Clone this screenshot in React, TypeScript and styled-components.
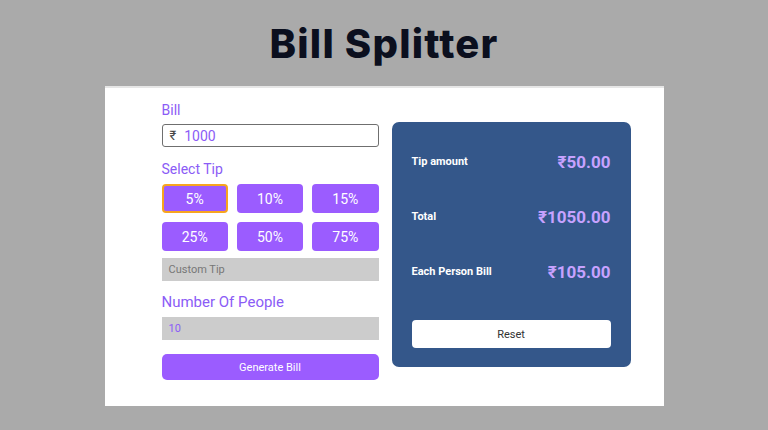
import React from 'react';
import styled, { createGlobalStyle } from 'styled-components';

const Global = createGlobalStyle`
  body {
    margin: 0;
    background: #aaaaaa;
    font-family: Roboto, "Liberation Sans", Arial, sans-serif;
  }
`;

const Page = styled.div`
  width: 768px;
  height: 430px;
  display: flex;
  flex-direction: column;
  align-items: center;
`;

const Title = styled.h1`
  margin: 0;
  height: 86px;
  display: flex;
  align-items: center;
  font-family: Inter, "Noto Sans", sans-serif;
  font-weight: 800;
  font-size: 40px;
  letter-spacing: 1.2px;
  color: #0b0f1e;
`;

const Card = styled.div`
  box-sizing: border-box;
  width: 559px;
  height: 320px;
  background: #ffffff;
  border-top: 2px solid #e6e6e6;
  padding: 14px 33px 0 57px;
  display: grid;
  grid-template-columns: 217px 239px;
  column-gap: 13px;
  align-items: start;
`;

const Form = styled.div`
  display: flex;
  flex-direction: column;
`;

const Label = styled.label<{ $size?: number; $top?: number }>`
  font-size: ${(p) => p.$size ?? 14}px;
  line-height: ${(p) => (p.$size ?? 14) + 2}px;
  color: #8b5cf6;
  margin-top: ${(p) => p.$top ?? 0}px;
  margin-bottom: 6px;
`;

const BillBox = styled.div`
  box-sizing: border-box;
  height: 23px;
  border: 1px solid #6f6f6f;
  border-radius: 3px;
  display: flex;
  align-items: center;
  gap: 8px;
  padding: 0 7px;
  color: #8b5cf6;
  font-size: 14px;
`;

const Rupee = styled.span`
  font-size: 13px;
  color: #444;
`;

const TipGrid = styled.div`
  display: grid;
  grid-template-columns: repeat(3, 1fr);
  gap: 9px;
  margin-top: 1px;
`;

const TipButton = styled.button<{ $active?: boolean }>`
  box-sizing: border-box;
  height: 29px;
  border: ${(p) => (p.$active ? '2px solid #f7a51f' : 'none')};
  border-radius: 4px;
  background: #9b5cff;
  color: #ffffff;
  font-family: Roboto, "Liberation Sans", sans-serif;
  font-size: 14px;
  padding: 0;
`;

const GrayInput = styled.div<{ $top: number; $color: string }>`
  box-sizing: border-box;
  height: 23px;
  margin-top: ${(p) => p.$top}px;
  background: #cccccc;
  display: flex;
  align-items: center;
  padding: 0 7px;
  font-size: 11px;
  color: ${(p) => p.$color};
`;

const GenerateButton = styled.button`
  height: 26px;
  margin-top: 14px;
  border: none;
  border-radius: 5px;
  background: #9b5cff;
  color: #ffffff;
  font-family: Roboto, "Liberation Sans", sans-serif;
  font-size: 11px;
`;

const Panel = styled.div`
  box-sizing: border-box;
  margin-top: 20px;
  height: 245px;
  background: #34578a;
  border-radius: 7px;
  padding: 12px 20px 19px;
  display: flex;
  flex-direction: column;
`;

const Row = styled.div`
  height: 55px;
  display: flex;
  align-items: center;
  justify-content: space-between;
`;

const RowLabel = styled.span`
  color: #ffffff;
  font-size: 11px;
  font-weight: 700;
`;

const RowValue = styled.span`
  color: #c7a2ff;
  font-size: 17px;
  font-weight: 700;
`;

const ResetButton = styled.button`
  margin-top: auto;
  height: 28px;
  border: none;
  border-radius: 4px;
  background: #ffffff;
  color: #333333;
  font-family: Roboto, "Liberation Sans", sans-serif;
  font-size: 11px;
`;

const tips = ['5%', '10%', '15%', '25%', '50%', '75%'];

const results = [
  { label: 'Tip amount', value: '₹50.00' },
  { label: 'Total', value: '₹1050.00' },
  { label: 'Each Person Bill', value: '₹105.00' },
];

const App = () => {
  return (
    <>
      <Global />
      <Page>
        <Title>Bill Splitter</Title>
        <Card>
          <Form>
            <Label>Bill</Label>
            <BillBox>
              <Rupee>₹</Rupee>
              1000
            </BillBox>
            <Label $top={14}>Select Tip</Label>
            <TipGrid>
              {tips.map((t, i) => (
                <TipButton key={t} $active={i === 0}>
                  {t}
                </TipButton>
              ))}
            </TipGrid>
            <GrayInput $top={7} $color="#777777">Custom Tip</GrayInput>
            <Label $size={15} $top={13}>Number Of People</Label>
            <GrayInput $top={0} $color="#8b5cf6">10</GrayInput>
            <GenerateButton>Generate Bill</GenerateButton>
          </Form>
          <Panel>
            {results.map((r) => (
              <Row key={r.label}>
                <RowLabel>{r.label}</RowLabel>
                <RowValue>{r.value}</RowValue>
              </Row>
            ))}
            <ResetButton>Reset</ResetButton>
          </Panel>
        </Card>
      </Page>
    </>
  );
};

export default App;
